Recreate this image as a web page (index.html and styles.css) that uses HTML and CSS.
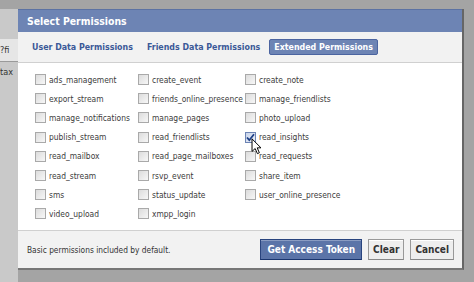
FILE: index.html
```html
<!DOCTYPE html>
<html lang="en">
<head>
    <meta charset="UTF-8">
    <title>Select Permissions</title>
    <link rel="stylesheet" href="styles.css">
</head>
<body>
    <div class="backdrop">
        <div class="page-strip">
            <div class="page-field">?fi</div>
            <div class="page-text">tax</div>
        </div>
    </div>

    <div class="dialog">
        <div class="dialog-title">Select Permissions</div>

        <div class="tabs">
            <span class="tab">User Data Permissions</span>
            <span class="tab">Friends Data Permissions</span>
            <span class="tab tab-active">Extended Permissions</span>
        </div>

        <div class="perms">
            <label class="perm"><span class="box"></span>ads_management</label>
            <label class="perm"><span class="box"></span>create_event</label>
            <label class="perm"><span class="box"></span>create_note</label>

            <label class="perm"><span class="box"></span>export_stream</label>
            <label class="perm"><span class="box"></span>friends_online_presence</label>
            <label class="perm"><span class="box"></span>manage_friendlists</label>

            <label class="perm"><span class="box"></span>manage_notifications</label>
            <label class="perm"><span class="box"></span>manage_pages</label>
            <label class="perm"><span class="box"></span>photo_upload</label>

            <label class="perm"><span class="box"></span>publish_stream</label>
            <label class="perm"><span class="box"></span>read_friendlists</label>
            <label class="perm"><span class="box checked">
                <svg class="tick" viewBox="0 0 11 11" width="11" height="11">
                    <path d="M2 5.5 L4.3 8.2 L9 2.2" fill="none" stroke="#1d3f86" stroke-width="1.8"/>
                </svg>
            </span>read_insights</label>

            <label class="perm"><span class="box"></span>read_mailbox</label>
            <label class="perm"><span class="box"></span>read_page_mailboxes</label>
            <label class="perm"><span class="box"></span>read_requests</label>

            <label class="perm"><span class="box"></span>read_stream</label>
            <label class="perm"><span class="box"></span>rsvp_event</label>
            <label class="perm"><span class="box"></span>share_item</label>

            <label class="perm"><span class="box"></span>sms</label>
            <label class="perm"><span class="box"></span>status_update</label>
            <label class="perm"><span class="box"></span>user_online_presence</label>

            <label class="perm"><span class="box"></span>video_upload</label>
            <label class="perm"><span class="box"></span>xmpp_login</label>
            <span></span>
        </div>

        <div class="footer">
            <span class="note">Basic permissions included by default.</span>
            <div class="buttons">
                <button class="btn btn-primary">Get Access Token</button>
                <button class="btn">Clear</button>
                <button class="btn">Cancel</button>
            </div>
        </div>
    </div>

    <!-- mouse pointer over read_insights -->
    <svg class="cursor" viewBox="0 0 12 19" width="11" height="17">
        <path d="M1 1 L1 15 L4.5 11.8 L7 17.5 L9.2 16.5 L6.8 11 L11 11 Z" fill="#fff" stroke="#000" stroke-width="1.1" stroke-linejoin="round"/>
    </svg>
</body>
</html>
```

FILE: styles.css
```css
body {
    margin: 0;
    width: 474px;
    height: 282px;
    overflow: hidden;
    background-color: #a4a4a4;
    font-family: "DejaVu Sans Condensed", "DejaVu Sans", sans-serif;
    font-stretch: condensed;
    position: relative;
}
.backdrop {
    display: flex;
    height: 100%;
    padding-top: 9px;
    box-sizing: border-box;
}
.page-strip {
    width: 18px;
    background-color: #c9c9c9;
    padding-top: 30px;
}
.page-field {
    background-color: #e6e6e6;
    border-bottom: 1px solid #9a9a9a;
    font-size: 9px;
    line-height: 22px;
    color: #333;
    overflow: hidden;
}
.page-text {
    font-size: 9px;
    color: #333;
    margin-top: 5px;
    overflow: hidden;
}
.dialog {
    position: absolute;
    left: 18px;
    top: 9px;
    width: 446px;
    height: 261px;
    background-color: #fff;
    border-right: 2px solid #666;
    border-bottom: 2px solid #777;
    box-sizing: border-box;
    display: flex;
    flex-direction: column;
}
.dialog-title {
    background-color: #6d84b4;
    color: #fff;
    font-weight: bold;
    font-size: 10.4px;
    height: 22px;
    line-height: 22px;
    padding-left: 9px;
    border-top: 1px solid #5b72a3;
}
.tabs {
    height: 30px;
    background-color: #f2f2f2;
    border-bottom: 1px solid #d0d0d0;
    display: flex;
    align-items: center;
    gap: 4px;
    padding-left: 9px;
}
.tab {
    font-size: 8.8px;
    font-weight: bold;
    color: #3b5998;
    padding: 2px 4px;
    border: 1px solid transparent;
    border-radius: 2px;
}
.tab-active {
    background-color: #6d84b4;
    border-color: #4b64a0;
    color: #fff;
}
.perms {
    display: grid;
    grid-template-columns: 103px 107px 1fr;
    grid-auto-rows: 19.2px;
    padding: 7px 0 0 17px;
    flex: 1;
}
.perm {
    display: flex;
    align-items: center;
    gap: 3px;
    font-size: 8.4px;
    color: #3a3a3a;
    white-space: nowrap;
}
.box {
    width: 11px;
    height: 11px;
    flex: none;
    box-sizing: border-box;
    border: 1px solid #a9a9a9;
    background: linear-gradient(135deg, #dcdcdc, #f7f7f7);
    position: relative;
}
.box.checked {
    border-color: #6d84b4;
    background: linear-gradient(135deg, #c7d3ea, #eef2fa);
}
.tick {
    position: absolute;
    left: -1px;
    top: -1px;
}
.footer {
    height: 37px;
    background-color: #f2f2f2;
    border-top: 1px solid #d0d0d0;
    display: flex;
    align-items: center;
    justify-content: space-between;
    padding: 0 8px 0 9px;
}
.note {
    font-size: 8.3px;
    color: #333;
}
.buttons {
    display: flex;
    gap: 6px;
}
.btn {
    font-family: inherit;
    font-stretch: condensed;
    font-size: 10px;
    font-weight: bold;
    color: #333;
    background-color: #eee;
    border: 1px solid #999;
    border-bottom-color: #888;
    height: 21px;
    padding: 0 4px;
    box-shadow: inset 0 1px 0 #fff;
}
.btn-primary {
    background-color: #5b74a8;
    border-color: #29447e #29447e #1a356e;
    color: #fff;
    box-shadow: inset 0 1px 0 #8a9cc2;
    padding: 0 6px;
}
.cursor {
    position: absolute;
    left: 251px;
    top: 138px;
}
```
